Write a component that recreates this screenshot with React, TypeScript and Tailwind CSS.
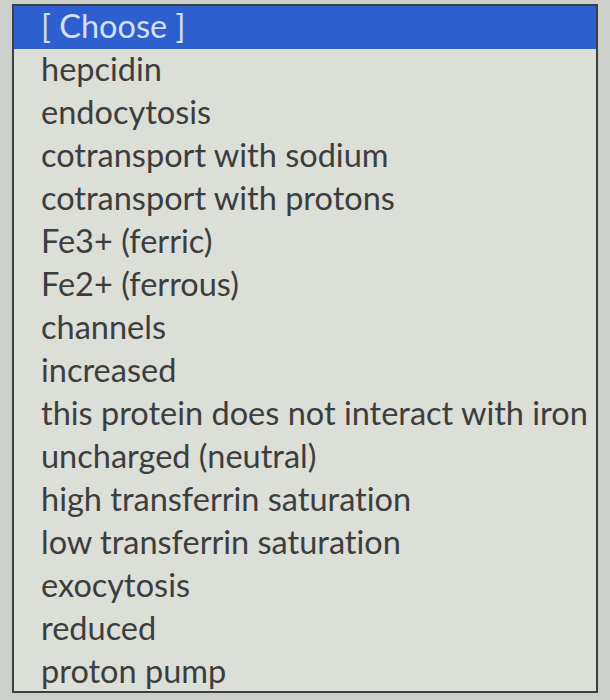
import React from 'react'

const options = [
    'hepcidin',
    'endocytosis',
    'cotransport with sodium',
    'cotransport with protons',
    'Fe3+ (ferric)',
    'Fe2+ (ferrous)',
    'channels',
    'increased',
    'this protein does not interact with iron',
    'uncharged (neutral)',
    'high transferrin saturation',
    'low transferrin saturation',
    'exocytosis',
    'reduced',
    'proton pump',
]

const App: React.FC = () => {
    return (
        <div
            className="w-[610px] h-[700px] bg-[#cdcfca] pt-[4px] pl-[12px] overflow-hidden [font-variant-ligatures:none]"
            style={{ fontFamily: 'Lato, "Open Sans", sans-serif' }}
        >
            <div className="w-[586px] h-[689px] border-2 border-[#3b3e42] bg-[#dcded8] overflow-hidden">
                <div className="h-[43px] bg-[#2d5fcf] flex items-center pl-[27px] pb-[2px] text-[32.5px] leading-none text-[#d3e0f5]">
                    [ Choose ]
                </div>
                {options.map((opt) => (
                    <div
                        key={opt}
                        className="h-[43px] flex items-center pl-[27px] pb-[2px] text-[32.5px] leading-none text-[#3c3d3d] whitespace-nowrap"
                    >
                        {opt}
                    </div>
                ))}
            </div>
        </div>
    )
}

export default App
